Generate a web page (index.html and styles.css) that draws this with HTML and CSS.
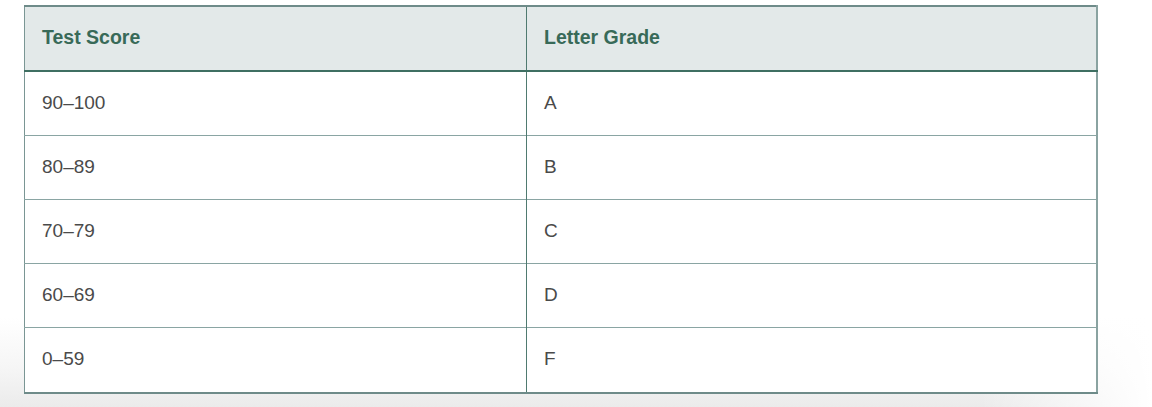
FILE: index.html
```html
<!DOCTYPE html>
<html>
<head>
<meta charset="utf-8">
<link rel="stylesheet" href="styles.css">
</head>
<body>
<div class="page">
  <table class="grades">
    <thead>
      <tr><th class="col-score">Test Score</th><th>Letter Grade</th></tr>
    </thead>
    <tbody>
      <tr><td>90–100</td><td>A</td></tr>
      <tr><td>80–89</td><td>B</td></tr>
      <tr><td>70–79</td><td>C</td></tr>
      <tr><td>60–69</td><td>D</td></tr>
      <tr><td>0–59</td><td>F</td></tr>
    </tbody>
  </table>
</div>
</body>
</html>
```
FILE: styles.css
```css
html, body {
  margin: 0;
  height: 100%;
}
body {
  background:
    linear-gradient(to right, rgba(255,255,255,0) 0%, rgba(255,255,255,0) 85%, #ffffff 100%),
    linear-gradient(to bottom, #ffffff 0%, #ffffff 78%, #f6f6f6 90%, #ebebeb 100%);
  font-family: "Liberation Sans", Arial, sans-serif;
}
.page {
  padding: 5px 0 0 24px;
}
.grades {
  width: 1074px;
  border-collapse: collapse;
  border-top: 2px solid #6e8b89;
  border-bottom: 2px solid #6e8b89;
  border-left: 1px solid #7a9694;
  border-right: 2px solid #8aa3a1;
  background: #ffffff;
}
.grades th,
.grades td {
  text-align: left;
  vertical-align: middle;
  padding: 0 0 2px 17px;
}
.grades th {
  height: 61px;
  background: #e3e9e9;
  color: #386a58;
  font-size: 19.5px;
  font-weight: bold;
  border-bottom: 2px solid #3f6f62;
}
.grades th.col-score {
  width: 484px;
}
.grades td {
  height: 61px;
  color: #4a4a4a;
  font-size: 19px;
  border-top: 1px solid #8aa5a3;
}
.grades tbody tr:last-child td {
  height: 62px;
}
.grades th + th,
.grades td + td {
  border-left: 1px solid #4f7a70;
}
.grades tbody tr:first-child td {
  border-top: none;
}
```
